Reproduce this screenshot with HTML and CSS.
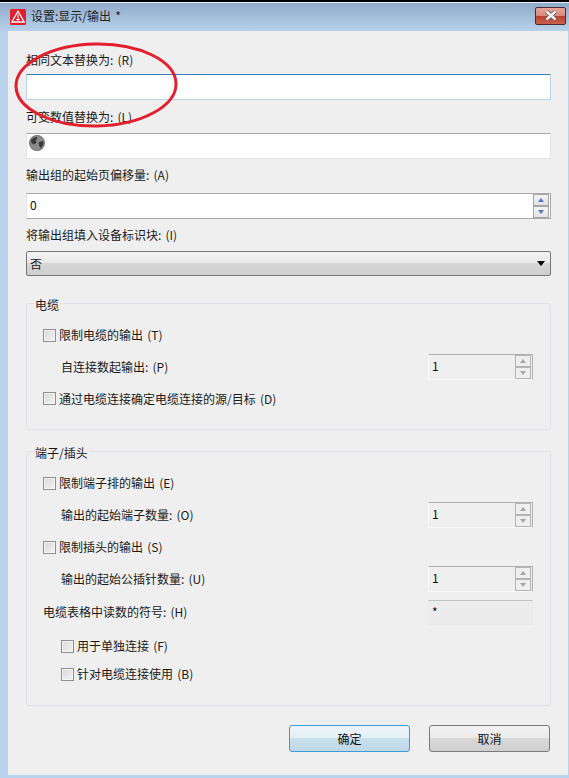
FILE: index.html
```html
<!DOCTYPE html>
<html lang="zh">
<head>
<meta charset="utf-8">
<title>设置:显示/输出</title>
<link rel="stylesheet" href="styles.css">
</head>
<body>
<div class="window">
  <div class="topline"></div>
  <div class="titlebar">
    <svg class="appicon" width="16" height="16" viewBox="0 0 16 16"><rect width="16" height="16" rx="1.5" fill="#e0202c"/><path d="M8 2.2 14.2 13H1.8Z" fill="none" stroke="#fff" stroke-width="1.3"/><path d="M8 5.5v4M6.3 10.5h3.4M8 10.500v1.500" stroke="#fff" stroke-width="1"/></svg>
    <span class="title">设置:显示/输出 *</span>
    <div class="close"><svg width="14" height="11" viewBox="0 0 14 11"><path d="M2.5 1.5 11.5 9.5M11.5 1.5 2.5 9.5" stroke="#555" stroke-width="4"/><path d="M2.5 1.5 11.5 9.5M11.5 1.5 2.5 9.5" stroke="#f4f4f4" stroke-width="2.4"/></svg></div>
  </div>
  <div class="content">
    <div class="label l1">相同文本替换为: (R)</div>
    <div class="field focus"></div>
    <div class="label l2">可变数值替换为: (L)</div>
    <div class="field gray">
      <svg class="globe" width="16" height="16" viewBox="0 0 15 15"><circle cx="7.5" cy="7.5" r="7" fill="#8a8a8a"/><path d="M2 4.500c2-2 4-3 6-2.500L6.500 5 7 7.500 4 9 2 7ZM9 7l4-1.500.8 3-2.800 4L9.500 10Z" fill="#3a3a3a"/><circle cx="7.500" cy="7.500" r="7" fill="none" stroke="#777"/></svg>
    </div>
    <div class="label l3">输出组的起始页偏移量: (A)</div>
    <div class="field gray spinfield">
      <span class="value">0</span>
      <div class="spin"><span class="sb"><i class="up"></i></span><span class="sb"><i class="down"></i></span></div>
    </div>
    <div class="label l4">将输出组填入设备标识块: (I)</div>
    <div class="combo"><span>否</span><i class="arrow"></i></div>

    <section class="group g1">
      <div class="legend">电缆</div>
      <div class="row"><span class="check"></span><span>限制电缆的输出 (T)</span></div>
      <div class="row sub"><span class="sublabel">自连接数起输出: (P)</span>
        <div class="numbox"><span class="value">1</span><div class="spin off"><span class="sb"><i class="up"></i></span><span class="sb"><i class="down"></i></span></div></div>
      </div>
      <div class="row tight"><span class="check"></span><span>通过电缆连接确定电缆连接的源/目标 (D)</span></div>
    </section>

    <section class="group g2">
      <div class="legend">端子/插头</div>
      <div class="row"><span class="check"></span><span>限制端子排的输出 (E)</span></div>
      <div class="row sub"><span class="sublabel">输出的起始端子数量: (O)</span>
        <div class="numbox"><span class="value">1</span><div class="spin off"><span class="sb"><i class="up"></i></span><span class="sb"><i class="down"></i></span></div></div>
      </div>
      <div class="row"><span class="check"></span><span>限制插头的输出 (S)</span></div>
      <div class="row sub"><span class="sublabel">输出的起始公插针数量: (U)</span>
        <div class="numbox"><span class="value">1</span><div class="spin off"><span class="sb"><i class="up"></i></span><span class="sb"><i class="down"></i></span></div></div>
      </div>
      <div class="row wide"><span>电缆表格中读数的符号: (H)</span><div class="numbox plain"><span class="value">*</span></div></div>
      <div class="row indent wider"><span class="check"></span><span>用于单独连接 (F)</span></div>
      <div class="row indent short"><span class="check"></span><span>针对电缆连接使用 (B)</span></div>
    </section>

    <div class="buttons">
      <div class="btn default">确定</div>
      <div class="btn">取消</div>
    </div>
  </div>
  <svg class="ellipse" width="170" height="92" viewBox="0 0 170 92"><ellipse cx="85" cy="46" rx="80" ry="41" transform="rotate(-1 85 46)" fill="none" stroke="#e41e2c" stroke-width="3"/></svg>
</div>
</body>
</html>
```
FILE: styles.css
```css
* { box-sizing: border-box; }
html, body { margin: 0; padding: 0; }
body { width: 569px; height: 778px; overflow: hidden; background: #b9d3ec; font: 12px/16px "Noto Sans CJK SC", "Liberation Sans", sans-serif; color: #1a1a1a; word-spacing: 1.5px; }
.window { position: relative; width: 569px; height: 778px; display: flex; flex-direction: column; }
.topline { height: 3px; flex: none; background: linear-gradient(#000 0 2px, #e8eef4 2px); }
.titlebar { height: 28px; flex: none; display: flex; align-items: center; padding: 0 3px 0 10px; background: linear-gradient(#8eabc9, #b8d1ea); }
.appicon { flex: none; margin-top: -1px; }
.title { margin-left: 5px; margin-top: -2px; font-size: 12px; color: #222; }
.close { margin-left: auto; margin-top: -3px; width: 31px; height: 18px; display: flex; align-items: center; justify-content: center; border: 1px solid #4a2b33; border-radius: 2px; background: linear-gradient(#e9a598 0, #d98a7c 48%, #b8432f 52%, #c9604c 100%); }
.content { flex: none; height: 744px; margin: 0 1px 0 8px; padding: 21px 17px 0 18px; background: #efefef; }
.label { height: 16px; }
.l2 { margin-top: 9px; }
.l3 { margin-top: 8px; }
.l4 { margin-top: 8px; }
.field { height: 26px; margin-top: 6px; background: #fff; border: 1px solid #b9d3ea; border-top-color: #3d7fb8; border-left-color: #b9d3ea; border-radius: 1px; display: flex; align-items: center; }
.field.gray { margin-top: 8px; border: 1px solid #e2e6ea; border-top-color: #a9a9a9; border-left-color: #e2e6ea; }
.l3 + .field { margin-top: 10px; }
.globe { margin-left: 2px; margin-top: -6px; }
.spinfield { position: relative; padding-left: 3px; border-right-color: #a9a9a9 !important; border-bottom-color: #a9a9a9 !important; }
.value { color: #111; margin-top: -3px; }
.spinfield .spin { margin-left: auto; margin-right: 1px; }
.spin { width: 16px; height: 24px; flex: none; display: flex; flex-direction: column; background: #fff; }
.sb { height: 12px; flex: none; display: flex; align-items: center; justify-content: center; border: 1px solid #a5a5a5; background: linear-gradient(#f4f4f4, #e3e3e3); }
.sb i { display: block; width: 0; height: 0; border-left: 3.500px solid transparent; border-right: 3.500px solid transparent; }
.up { border-bottom: 4px solid #5a74c4; }
.down { border-top: 4px solid #5a74c4; }
.off .sb { border-color: #b4b4b4; background: #efefef; }
.off .up { border-bottom-color: #a5a5a5; }
.off .down { border-top-color: #a5a5a5; }
.combo { height: 25px; margin-top: 8px; display: flex; align-items: center; justify-content: space-between; padding: 0 5px 0 3px; border: 1px solid #777; border-radius: 2px; background: linear-gradient(#f3f3f3 0, #e9e9e9 48%, #d6d6d6 50%, #cfcfcf 100%); }
.arrow { display: block; width: 0; height: 0; border-left: 4px solid transparent; border-right: 4px solid transparent; border-top: 5px solid #000; }
.group { position: relative; border: 1px solid #dde3e9; border-radius: 3px; padding: 15px 0 0 16px; }
.g1 { height: 127px; margin-top: 27px; }
.g2 { height: 255px; margin-top: 21px; }
.legend { position: absolute; left: 7px; top: -7px; height: 16px; padding: 0 1px; background: #efefef; }
.row { height: 32px; display: flex; align-items: center; padding-right: 17px; }
.tight { height: 31px; }
.wide { height: 34px; }
.wider { height: 34px; }
.short { height: 28px; margin-top: -3px; }
.indent { padding-left: 18px; }
.check { width: 13px; height: 13px; flex: none; margin-right: 3px; border: 1px solid #8e8e8e; background: linear-gradient(135deg, #d8d8d8, #f4f4f4); box-shadow: inset 0 0 0 1px #f4f4f4; }
.sublabel { margin-left: 18px; }
.numbox { margin-left: auto; width: 105px; height: 26px; flex: none; display: flex; align-items: center; padding-left: 3px; border: 1px solid #f8f8f8; border-top-color: #b0b0b0; border-right-color: #b0b0b0; background: #efefef; }
.numbox .spin { margin-left: auto; margin-right: 1px; background: transparent; }
.plain { border-color: #e8e8e8; border-top-color: #c4c4c4; background: #ececec; height: 25px; }
.plain .value { margin-top: 0; }
.buttons { display: flex; justify-content: flex-end; gap: 19px; margin-top: 19px; padding-right: 1px; }
.btn { width: 121px; height: 27px; display: flex; align-items: center; justify-content: center; border: 1px solid #7a7a7a; border-radius: 3px; color: #111; background: linear-gradient(#f3f3f3 0, #ebebeb 48%, #d8d8d8 50%, #cfcfcf 100%); }
.btn.default { border-color: #3c9ad6; background: linear-gradient(#edf4f9 0, #e4eff6 48%, #c9dfec 50%, #bfd8e8 100%); }
.ellipse { position: absolute; left: 11px; top: 39px; }
```
